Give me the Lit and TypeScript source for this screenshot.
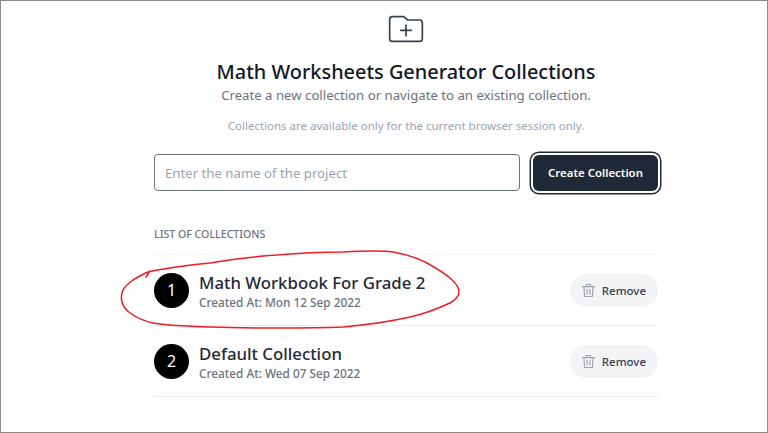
import { LitElement, html, css } from 'lit';
import { customElement } from 'lit/decorators.js';

const collections = [
  { name: 'Math Workbook For Grade 2', created: 'Created At: Mon 12 Sep 2022' },
  { name: 'Default Collection', created: 'Created At: Wed 07 Sep 2022' },
];

@customElement('app-root')
export class AppRoot extends LitElement {
  static styles = css`
    :host {
      display: block;
      position: relative;
      width: 768px;
      height: 433px;
      box-sizing: border-box;
      overflow: hidden;
      background: #fff;
      border: 1px solid #8c8c8c;
      font-family: 'Noto Sans', 'Open Sans', sans-serif;
      color: #1f2937;
    }
    .page {
      display: flex;
      flex-direction: column;
      padding: 8px 109px 0 153px;
    }
    .head {
      display: flex;
      flex-direction: column;
      align-items: center;
    }
    .folder {
      width: 40px;
      height: 40px;
      color: #374151;
      display: block;
    }
    h1 {
      margin: 9px 0 0;
      font-size: 19.9px;
      line-height: 28px;
      font-weight: 500;
      color: #111827;
    }
    .sub {
      margin: -1px 0 0;
      font-size: 13.2px;
      line-height: 20px;
      color: #6b7280;
    }
    .note {
      margin: 13px 0 0;
      font-size: 11.5px;
      line-height: 16px;
      color: #9ca3af;
    }
    .form {
      display: flex;
      gap: 13px;
      margin-top: 20px;
      align-items: center;
    }
    input {
      flex: 1;
      min-width: 0;
      height: 37px;
      box-sizing: border-box;
      padding: 0 10px;
      border: 1px solid #6b7280;
      border-radius: 4px;
      font: inherit;
      font-size: 13.2px;
      outline: none;
    }
    input::placeholder {
      color: #9ca3af;
      opacity: 1;
    }
    .create {
      width: 125px;
      height: 36px;
      border: 0;
      border-radius: 6px;
      background: #1f2937;
      color: #fff;
      font: inherit;
      font-size: 11.4px;
      font-weight: 600;
      box-shadow: 0 0 0 2px #fff, 0 0 0 3.5px #1f2937;
    }
    .label {
      margin: 35px 0 0;
      font-size: 10.6px;
      line-height: 16px;
      font-weight: 500;
      color: #6b7280;
    }
    ul {
      list-style: none;
      margin: 12px 0 0;
      padding: 0;
      border-top: 1px solid #f3f4f6;
    }
    li {
      display: flex;
      align-items: center;
      gap: 10px;
      height: 70px;
      border-bottom: 1px solid #eeeef2;
    }
    .num {
      flex: none;
      width: 35px;
      height: 35px;
      border-radius: 50%;
      background: #000;
      color: #fff;
      display: flex;
      align-items: center;
      justify-content: center;
      font-size: 16px;
    }
    .info {
      flex: 1;
      min-width: 0;
      padding-top: 1px;
    }
    .name {
      font-size: 16.8px;
      line-height: 24px;
      font-weight: 500;
      color: #1f2937;
    }
    .date {
      margin-top: -1px;
      font-size: 11.8px;
      line-height: 16px;
      font-weight: 500;
      color: #6b7280;
    }
    .remove {
      display: flex;
      align-items: center;
      gap: 5px;
      height: 33px;
      padding: 0 12px 0 10px;
      border: 0;
      border-radius: 17px;
      background: #f3f4f6;
      color: #374151;
      font: inherit;
      font-size: 11.5px;
      font-weight: 500;
    }
    .trash {
      width: 17px;
      height: 17px;
      color: #9ca3af;
    }
    .scribble {
      position: absolute;
      left: -1px;
      top: -1px;
      width: 768px;
      height: 433px;
      pointer-events: none;
    }
  `;

  render() {
    return html`
      <div class="page">
        <div class="head">
          <svg class="folder" viewBox="0 0 24 24" fill="none" stroke="currentColor" stroke-width="1" stroke-linecap="round" stroke-linejoin="round">
            <path d="M2.2 6.2v11.6a1.6 1.6 0 0 0 1.6 1.6h16.4a1.6 1.6 0 0 0 1.6-1.6V8.2a1.6 1.6 0 0 0-1.6-1.6h-7.2L10.6 4.6H3.8a1.6 1.6 0 0 0-1.6 1.6z" />
            <path d="M12 9.6v6.4M8.8 12.8h6.4" />
          </svg>
          <h1>Math Worksheets Generator Collections</h1>
          <p class="sub">Create a new collection or navigate to an existing collection.</p>
          <p class="note">Collections are available only for the current browser session only.</p>
        </div>
        <div class="form">
          <input placeholder="Enter the name of the project" />
          <button class="create">Create Collection</button>
        </div>
        <div class="label">LIST OF COLLECTIONS</div>
        <ul>
          ${collections.map(
            (c, i) => html`
              <li>
                <div class="num">${i + 1}</div>
                <div class="info">
                  <div class="name">${c.name}</div>
                  <div class="date">${c.created}</div>
                </div>
                <button class="remove">
                  <svg class="trash" viewBox="0 0 24 24" fill="none" stroke="currentColor" stroke-width="1.6" stroke-linecap="round" stroke-linejoin="round">
                    <path d="M3.5 6.5h17M9 6.5V3.5h6v3M5.5 6.5l1 14h11l1-14M10 10.5v6.5M14 10.5v6.5" />
                  </svg>
                  Remove
                </button>
              </li>
            `
          )}
        </ul>
      </div>
      <svg class="scribble" viewBox="0 0 768 433" fill="none" stroke="#ee1c25" stroke-width="1.5" stroke-linecap="round">
        <path d="M146 277 L150 271 M148 272 C170 267 190 265 210 263 C235 259 255 256 277 255 C300 253 320 252 343 252 C360 251 380 250 393 252 C405 254 417 258 427 263 C436 268 444 273 450 278 C456 283 459 288 459 292 C459 297 455 300 450 303 C437 309 424 314 410 317 C388 322 365 325 343 327 C320 328 300 328 277 328 C255 328 232 328 210 327 C190 326 170 326 153 323 C144 321 137 318 130 313 C126 310 123 306 122 302 C121 298 121 294 123 290 C125 286 129 283 133 280 C138 277 143 274 148 272" />
      </svg>
    `;
  }
}
